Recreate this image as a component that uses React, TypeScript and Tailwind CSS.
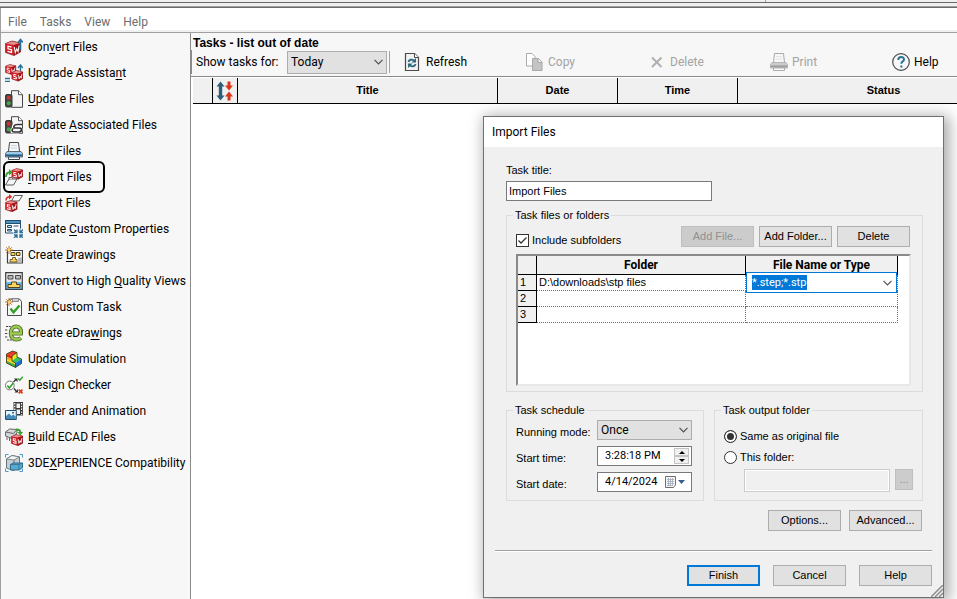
import type { ReactNode } from "react";

const UI = "font-[Roboto,'Open_Sans',sans-serif]";
const SANS = "font-['Liberation_Sans',Arial,sans-serif]";

function Svg({ children, size = 18 }: { children: ReactNode; size?: number }) {
  return (
    <svg width={size} height={size} viewBox="0 0 18 18" fill="none" className="shrink-0" aria-hidden="true">
      {children}
    </svg>
  );
}

function Cube({ x = 0, y = 0, s = 1 }: { x?: number; y?: number; s?: number }) {
  return (
    <g transform={`translate(${x} ${y}) scale(${s})`}>
      <path d="M.5 4.500 7 2l8.500 2v9L9 16.500l-8.500-3z" fill="#cf1c22" />
      <path d="M.5 4.500 7 2l8.500 2L9 6z" fill="#e88f8c" />
      <path d="M9 6l6.500-2v9L9 16.500z" fill="#a31418" />
      <path d="M.5 4.500 7 2l8.500 2v9L9 16.500l-8.500-3z" stroke="#7c2a2c" strokeWidth=".7" />
      <path d="M6.500 8 3 7.200v2.600l3.500.9v2.800L2.500 12.400" stroke="#fff" strokeWidth="1.300" />
      <path d="M9.300 8l1 5.500 1.500-3.700 1.200 2.700 1.200-6" stroke="#fff" strokeWidth="1.100" />
    </g>
  );
}

function UpArrow() {
  return <path d="M15.500 12V2M13 4.500 15.500 1.500 18 4.500" stroke="#2b7099" strokeWidth="1.600" />;
}

function TrafficPage({ children }: { children?: ReactNode }) {
  return (
    <Svg>
      <path d="M6.500.7h7l4 4v12.600h-11z" fill="#f4f4f4" stroke="#484848" />
      <path d="M13.500.7v4h4" fill="#fff" stroke="#484848" strokeWidth=".9" />
      <rect x=".5" y="4.500" width="6.500" height="12.500" rx="1.500" fill="#4a4444" stroke="#3a3a3a" />
      <circle cx="3.700" cy="7.800" r="2" fill="#d0342c" />
      <circle cx="3.700" cy="13.200" r="2" fill="#3fae49" />
      {children}
    </Svg>
  );
}

function Spark() {
  return (
    <>
      <path d="M4 0v8M0 4h8M1.300 1.300l5.400 5.400M6.700 1.300 1.300 6.700" stroke="#b5651d" strokeWidth=".9" />
      <circle cx="4" cy="4" r="1.400" fill="#ffd45c" />
    </>
  );
}

function PrinterIcon({ muted = false }: { muted?: boolean }) {
  const line = muted ? "#a9a9a9" : "#3e4a54";
  return (
    <Svg>
      <path d="M3.500 9.500l1-9h9l1 9" fill="#f7f7f7" stroke={line} />
      <path d="M6 3.500h6M6 6h6" stroke={muted ? "#ddd" : "#c4cace"} strokeWidth=".8" />
      <path d="M2 9.500h14l1.500 2v3.500H.5v-3.500z" fill={muted ? "#ccc" : "#9ccbea"} stroke={line} strokeWidth=".8" />
      <path d="M1 13.300h16" stroke={muted ? "#9f9f9f" : "#245f8a"} strokeWidth="1.800" />
      <path d="M3.500 15h11v2.500h-11z" fill="#fff" stroke={line} />
    </Svg>
  );
}

const TASKS: { label: [string, string, string]; icon: ReactNode; active?: boolean }[] = [
  {
    label: ["Con", "v", "ert Files"],
    icon: <Svg><Cube y={1} /><UpArrow /></Svg>,
  },
  {
    label: ["Upgrade Assista", "n", "t"],
    icon: (
      <Svg>
        <Cube s={0.7} y={-1} />
        <Cube x={6.5} y={5} s={0.74} />
        <path d="M0 14.500h5M0 17.500h5" stroke="#2b7099" strokeWidth="1.300" />
        <path d="M15.500 7V1.500M13 4l2.500-3L18 4" stroke="#2b7099" strokeWidth="1.400" />
      </Svg>
    ),
  },
  { label: ["", "U", "pdate Files"], icon: <TrafficPage /> },
  {
    label: ["Update ", "A", "ssociated Files"],
    icon: (
      <TrafficPage>
        <path d="M17 9h-5c-4 0-5 3-2 3h4c3 0 2.500 4-1 4H8.500c-2 0-2-2.500 0-3.500" stroke="#fff" strokeWidth="3.200" />
        <path d="M17 8.500h-4.500c-4 0-5 3.500-2 3.500h4c3 0 2.500 4-1 4H9c-2.500 0-2.500-3-.5-3.500" stroke="#303030" strokeWidth="1.600" />
      </TrafficPage>
    ),
  },
  { label: ["", "P", "rint Files"], icon: <PrinterIcon /> },
  {
    label: ["", "I", "mport Files"],
    active: true,
    icon: (
      <Svg>
        <Cube x={6.5} y={-1} s={0.74} />
        <path d="M1 9C1 5.500 2.500 4.300 5 4.300" stroke="#35a02b" strokeWidth="1.800" />
        <path d="M4 1l3.500 3.300L4 7.500z" fill="#35a02b" />
        <path d="M4 11h8l-3.500 6H.5z" fill="#f5f5f5" stroke="#5c5c5c" />
        <path d="M4 11V9.500h3L8 11" fill="#ddd" stroke="#5c5c5c" />
      </Svg>
    ),
  },
  {
    label: ["", "E", "xport Files"],
    icon: (
      <Svg>
        <path d="M9.500 1.500h8L14 7H6.500z" fill="#fafafa" stroke="#5c5c5c" />
        <Cube y={5} s={0.78} />
        <path d="M1 6.500C1 3.500 2.500 2.800 5 2.800" stroke="#d9302c" strokeWidth="1.600" />
        <path d="M4 0l3.200 2.800L4 5.600z" fill="#d9302c" />
      </Svg>
    ),
  },
  {
    label: ["Update ", "C", "ustom Properties"],
    icon: (
      <Svg>
        <path d="M.5.500h15v12.500H.5z" fill="#fff" stroke="#234f6e" />
        <path d="M.5.500h15v3H.5z" fill="#4f91bd" stroke="#234f6e" />
        <path d="M2.500 5.500h4v2h-4zM2.500 9.500h4v1.500h-4z" fill="#b8dcf0" stroke="#234f6e" />
        <path d="M8.500 6h5" stroke="#234f6e" />
        <path d="M8.500 8.500H18V18H8.500z" fill="#f7f7f7" />
        <path d="M9 9.500l3 3m0-3v3H9M18 9.500l-3 3m0-3v3h3M9 18l3-3m0 3v-3H9M18 18l-3-3m0 3v-3h3" stroke="#2b7099" strokeWidth="1.300" />
      </Svg>
    ),
  },
  {
    label: ["Create ", "D", "rawings"],
    icon: (
      <Svg>
        <path d="M2.500 4.500h15v12.500h-15z" fill="#fff" stroke="#3f3f3f" strokeWidth="1.200" />
        <path d="M6 6.500h4v3H6zM11.500 6.500H15v3h-3.500z" fill="#ffd45c" stroke="#4d431f" />
        <path d="M7.500 11.500h3v2h1.500V16H5v-2.500h2.500z" fill="#ffd45c" stroke="#4d431f" strokeWidth=".8" />
        <path d="M13 11.500h4v5h-4z" fill="#bbb" />
        <Spark />
      </Svg>
    ),
  },
  {
    label: ["Convert to High ", "Q", "uality Views"],
    icon: (
      <Svg>
        <path d="M.7.700h16.600v16.600H.7z" fill="#e7e7e7" />
        <path d="M1 10h16v7H1z" fill="#6ebbed" />
        <path d="M.7.700h16.600v16.600H.7z" stroke="#3f3f3f" strokeWidth="1.200" />
        <path d="M3 3.500h5v3.500H3zM10.500 3.500h5v3.500h-5z" fill="#b9b9b9" stroke="#4a4a4a" />
        <path d="M6.500 10h5v2.500h3.500v3H3v-3h3.500z" fill="#ffd45c" stroke="#4d431f" />
      </Svg>
    ),
  },
  {
    label: ["", "R", "un Custom Task"],
    icon: (
      <Svg>
        <path d="M2.500 3.500 5 1h9.500l2 2.500v14h-14z" fill="#f8f8f8" stroke="#4b4b4b" />
        <path d="M7.500 .500h6v3h-6z" fill="#d0d0d0" stroke="#777" strokeWidth=".8" />
        <path d="M5.500 10.500l3 3.800L14.500 7.500" stroke="#35a02b" strokeWidth="2.400" />
        <Spark />
      </Svg>
    ),
  },
  {
    label: ["Create eDra", "w", "ings"],
    icon: (
      <Svg>
        <path d="M1 2.500h5M0 6h3M0 9.500h3M0 13h3M2 16h5" stroke="#444" strokeDasharray="2 .7" />
        <path d="M6 9.500h10C16.500 5 14.500 2.500 11.300 2.500S5.800 5 5.800 9.200s2.500 6.300 5.500 6.300c2 0 3.500-.5 4.700-1.500" stroke="#4c6230" strokeWidth="4" />
        <path d="M6 9.500h10C16.500 5 14.500 2.500 11.300 2.500S5.800 5 5.800 9.200s2.500 6.300 5.500 6.300c2 0 3.500-.5 4.700-1.500" stroke="#9ccc4c" strokeWidth="2.300" />
      </Svg>
    ),
  },
  {
    label: ["Update Simulation", "", ""],
    icon: (
      <Svg>
        <path d="M1.500 4 7 6v5l3.500 2v4.500L1.500 13z" fill="#f7a51c" />
        <path d="M1.500 4 7.500 1 12 2.500 7 6z" fill="#ee3a22" />
        <path d="M1.500 4 7 6v2.500l-5.500-2z" fill="#e2231a" />
        <path d="M1.500 9 7 11l3.500 2v1.500l-9-4z" fill="#f4e01c" />
        <path d="M1.500 11l9 4v2.500l-9-4.500z" fill="#35b44a" />
        <path d="M7 6l5-3.500V7L7 11z" fill="#f4e01c" />
        <path d="M7 11l5-4 4.500 2-6 4z" fill="#35c45a" />
        <path d="M10.500 13l6-4v4.500l-6 4z" fill="#1a72d4" />
        <path d="M1.500 4 7.500 1 12 2.500V7l4.500 2v4.500l-6 4L1.500 13zM7 6v5l3.500 2v4.500M7 6l5-3.500" stroke="#33331c" strokeWidth=".8" />
      </Svg>
    ),
  },
  {
    label: ["Desi", "g", "n Checker"],
    icon: (
      <Svg>
        <circle cx="4.800" cy="9.500" r="4.400" fill="#fff" stroke="#777" />
        <path d="M2.300 9.500l2 2.500 4-5" stroke="#35a02b" strokeWidth="1.700" />
        <path d="M8.500 6 11 3.500M9 12.500l2.500 3" stroke="#333" strokeWidth="1.200" />
        <path d="M9 2.500h3.500V6zM9.500 16.500H13V13z" fill="#333" />
        <path d="M13.200 2.500 14.800 4.200 17.800.8" stroke="#35a02b" strokeWidth="1.500" />
        <path d="M13.700 13.500l3.800 3.800m0-3.800-3.800 3.800" stroke="#d3401f" strokeWidth="1.700" />
      </Svg>
    ),
  },
  {
    label: ["Render and Animation", "", ""],
    icon: (
      <Svg>
        <path d="M8.500 0H18v13.500H8.500z" fill="#3a3a3a" />
        <path d="M11.500 1.500h3.500V6h-3.500zM11.500 7.500h3.500V12h-3.500z" fill="#f4f4f4" />
        <path d="M9.800 1v12M16.600 1v12" stroke="#fff" strokeWidth="1.200" strokeDasharray="1.400 1.400" />
        <path d="M0 8h12v10H0z" fill="#f7f7f7" />
        <path d="M.5 8.500h10.800v9H.5z" fill="#e9f6ff" stroke="#234f6e" />
        <path d="M1 17v-3l3-2.500 2.500 2.500L8 12.500l2.800 2V17z" fill="#438bb9" />
        <circle cx="8" cy="10.700" r=".9" fill="#234f6e" />
      </Svg>
    ),
  },
  {
    label: ["", "B", "uild ECAD Files"],
    icon: (
      <Svg>
        <path d="M.5 4 4.500 1l7.500.5v3.500L8.500 8v3l-8-3z" fill="#d4d8da" stroke="#666" />
        <path d="M.5 4l8 1.500L12 1.500M2 8.500v3.500M4.500 9.500V13" stroke="#666" />
        <Cube x={6} y={5} s={0.77} />
        <path d="M11 1.500c3 0 4.500.5 4.500 3" stroke="#35a02b" strokeWidth="1.800" />
        <path d="M12.500 4H18l-2.700 3.500z" fill="#35a02b" />
      </Svg>
    ),
  },
  {
    label: ["3DE", "X", "PERIENCE Compatibility"],
    icon: (
      <Svg>
        <path d="M1.500 5 7 1.500l7.500 1.500v11L8 16.500l-6.500-2.500z" fill="#c7ced2" stroke="#66757e" />
        <path d="M1.500 5 7 1.500l7.500 1.500L9 6z" fill="#f0f2f3" stroke="#66757e" strokeWidth=".8" />
        <path d="M9 6v10" stroke="#66757e" />
        <path d="M5.500 10.500 8 9h9.500v4.500L14 16H5.500z" fill="#5aa9cf" stroke="#2e6f90" />
        <path d="M5.500 10.500H14V16M14 10.500 17.500 9" stroke="#2e6f90" strokeWidth=".8" />
        <path d="M3.500.5h-3v3M14.500.5h3v3M3.500 17.500h-3v-3M14.500 17.500h3v-3" stroke="#4b9cc4" />
      </Svg>
    ),
  },
];

const TOOLS: { label: string; icon: ReactNode; disabled?: boolean }[] = [
  {
    label: "Refresh",
    icon: (
      <Svg>
        <path d="M1.500.5h9l4 4v13h-13z" fill="#f2f2f2" stroke="#4b4b4b" strokeWidth="1.200" />
        <path d="M10.500.5v4h4" fill="#fff" stroke="#4b4b4b" />
        <path d="M4.500 9c.5-2.500 3.500-3 5.500-1.500M11.500 11c-.5 2.500-3.500 3-5.500 1.500" stroke="#2d687e" strokeWidth="1.800" />
        <path d="M12 5v4.500H7.500zM4 15v-4.500h4.500z" fill="#2d687e" />
      </Svg>
    ),
  },
  {
    label: "Copy",
    disabled: true,
    icon: (
      <Svg>
        <path d="M.5.5H6l3 3v9.500H.5z" fill="#fff" stroke="#a9a9a9" />
        <path d="M6.500 5.500h6l3.500 3.500v8.500H6.500z" fill="#c4c4c4" stroke="#a9a9a9" />
        <path d="M12 5.500V9.500h4" fill="#eee" stroke="#a9a9a9" />
      </Svg>
    ),
  },
  {
    label: "Delete",
    disabled: true,
    icon: (
      <Svg>
        <path d="M4 4.500l9.500 9.500M13.500 4.500 4 14" stroke="#b0b0b0" strokeWidth="2" />
      </Svg>
    ),
  },
  { label: "Print", disabled: true, icon: <PrinterIcon muted /> },
  {
    label: "Help",
    icon: (
      <Svg>
        <circle cx="9" cy="9" r="8.300" fill="#f7f7f7" stroke="#4b4b4b" strokeWidth="1.200" />
        <path d="M6.300 7c0-4 5.700-3.700 5.700-.6 0 2-2.700 2-2.700 4.300M9.300 12.500v2" stroke="#2a7395" strokeWidth="2" />
      </Svg>
    ),
  },
];

function Chevron() {
  return (
    <svg width="9" height="6" viewBox="0 0 9 6" fill="none" className="pointer-events-none" aria-hidden="true">
      <path d="M.5.8l4 4 4-4" stroke="#505050" strokeWidth="1.200" />
    </svg>
  );
}

function Select({ id, value, className }: { id: string; value: string; className: string }) {
  return (
    <div className={`relative shrink-0 ${className}`}>
      <select id={id} className="h-full w-full appearance-none border border-[#adadad] bg-[#e1e1e1] px-[3px] text-black">
        <option>{value}</option>
      </select>
      <span className="pointer-events-none absolute inset-y-0 right-1 flex items-center">
        <Chevron />
      </span>
    </div>
  );
}

function Button({ children, disabled, primary }: { children: ReactNode; disabled?: boolean; primary?: boolean }) {
  return (
    <button
      type="button"
      disabled={disabled}
      className={`h-[21px] w-[73px] shrink-0 text-center ${
        primary
          ? "border-2 border-[#0078d7] bg-[#e1e1e1]"
          : disabled
            ? "border border-[#bfbfbf] bg-[#cccccc] text-[#909090]"
            : "border border-[#adadad] bg-[#e1e1e1]"
      }`}
    >
      {children}
    </button>
  );
}

function Group({ title, className, children }: { title: string; className: string; children: ReactNode }) {
  return (
    <fieldset className={`min-w-0 border border-[#dcdcdc] ${className}`}>
      <legend className="-ml-[3px] px-[2px] leading-4">{title}</legend>
      {children}
    </fieldset>
  );
}

function FileTable() {
  return (
    <div className="mt-[7px] h-[132px] border-2 border-t-[#8a8a8a] border-r-[#e8e8e8] border-b-[#e8e8e8] border-l-[#8a8a8a] bg-white">
      <table className="w-[380px] table-fixed border-separate border-spacing-0 text-left">
        <colgroup>
          <col className="w-[19px]" />
          <col className="w-[209px]" />
          <col />
        </colgroup>
        <thead className={`${UI} text-center text-xs`}>
          <tr className="h-[19px] bg-[#f0f0f0]">
            <th className="border-r border-b border-black" />
            <th className="border-r border-b border-black p-0 font-bold">Folder</th>
            <th className="border-r border-b border-black p-0 font-bold">File Name or Type</th>
          </tr>
        </thead>
        <tbody>
          {["D:\\downloads\\stp files", "", ""].map((folder, i) => (
            <tr key={i} className="h-4">
              <th className="border-r border-b border-black bg-[#f0f0f0] p-0 pl-[2px] font-normal leading-[15px]">{i + 1}</th>
              <td className="border-r border-b border-dotted border-[#707070] p-0 pl-[2px] leading-[15px]">{folder}</td>
              <td className="relative border-r border-b border-dotted border-[#707070] p-0">
                {i === 0 && (
                  <div className="absolute -top-[3px] left-0 flex h-[21px] w-full items-center border border-[#0078d7] bg-white pr-1 pl-[5px]">
                    <input
                      aria-label="File name or type"
                      defaultValue="*.step;*.stp"
                      className={`${UI} h-[15px] w-[55px] bg-[#0078d7] text-white`}
                    />
                    <button type="button" aria-label="Show file types" className="ml-auto">
                      <Chevron />
                    </button>
                  </div>
                )}
              </td>
            </tr>
          ))}
        </tbody>
      </table>
    </div>
  );
}

function ImportDialog() {
  return (
    <div
      role="dialog"
      aria-label="Import Files"
      className={`${SANS} absolute top-[116px] right-[13px] w-[461px] border border-[#707070] bg-[#f0f0f0] text-[11px] text-black shadow-[3px_2px_14px_2px_rgba(0,0,0,0.35)]`}
    >
      <h2 className={`${UI} flex h-[30px] items-center bg-white px-2 text-xs`}>Import Files</h2>
      <div className="pt-[15px] pr-5 pl-[22px]">
        <label htmlFor="title" className="block leading-4">Task title:</label>
        <input
          id="title"
          defaultValue="Import Files"
          className="mt-[3px] block h-5 w-[206px] border border-[#7a7a7a] bg-white px-[2px]"
        />
        <Group title="Task files or folders" className="mt-[6px] pt-[3px] pr-[11px] pb-[5px] pl-[9px]">
          <div className="flex items-end gap-[5px] pr-px">
            <label className="mr-auto flex items-center gap-[3px] leading-[13px]">
              <span className="relative size-[13px]">
                <input type="checkbox" defaultChecked className="block size-[13px] appearance-none border border-[#333] bg-white" />
                <svg viewBox="0 0 13 13" fill="none" className="pointer-events-none absolute inset-0" aria-hidden="true">
                  <path d="M2.500 6.500 5 9l5.500-5.500" stroke="#333" strokeWidth="1.300" />
                </svg>
              </span>
              Include subfolders
            </label>
            <Button disabled>Add File...</Button>
            <Button>Add Folder...</Button>
            <Button>Delete</Button>
          </div>
          <FileTable />
        </Group>

        <div className="mt-[10px] flex items-stretch gap-[10px]">
          <Group title="Task schedule" className="w-[198px] pt-[2px] pr-[11px] pb-2 pl-[9px]">
            <div className="flex flex-col gap-[6px]">
              <div className="flex items-end justify-between">
                <label htmlFor="mode" className="leading-4">Running mode:</label>
                <Select id="mode" value="Once" className={`${UI} h-5 w-[95px] text-xs`} />
              </div>
              <div className="flex items-end justify-between">
                <label htmlFor="time" className="leading-4">Start time:</label>
                <div className="flex h-5 w-[95px] items-center border border-[#7a7a7a] bg-white pr-[2px] pl-[7px]">
                  <input id="time" defaultValue="3:28:18 PM" className={`${UI} min-w-0 flex-1`} />
                  <div className="flex w-[15px] flex-col">
                    <button type="button" aria-label="Later" className="flex h-2 items-center justify-center border border-[#c4c4c4] bg-[#f0f0f0]">
                      <svg width="6" height="3" viewBox="0 0 6 3" aria-hidden="true"><path d="M0 3 3 0l3 3z" /></svg>
                    </button>
                    <button type="button" aria-label="Earlier" className="flex h-2 items-center justify-center border border-[#c4c4c4] bg-[#f0f0f0]">
                      <svg width="6" height="3" viewBox="0 0 6 3" aria-hidden="true"><path d="M0 0h6L3 3z" /></svg>
                    </button>
                  </div>
                </div>
              </div>
              <div className="flex items-end justify-between">
                <label htmlFor="date" className="leading-4">Start date:</label>
                <div className="flex h-5 w-[95px] items-center border border-[#7a7a7a] bg-white pr-[6px] pl-[7px]">
                  <input id="date" defaultValue="4/14/2024" className={`${UI} min-w-0 flex-1`} />
                  <button type="button" aria-label="Open calendar">
                    <svg width="20" height="12" viewBox="0 0 20 12" fill="none" aria-hidden="true">
                      <path d="M.5.5h10v8.500l-2 2.500h-8z" fill="#f3f5f8" stroke="#746e70" />
                      <path d="M2 3.500h7M2 5.500h7M2 7.500h7M2 9.500h5M3.500 2v8M5.500 2v8M7.500 2v8" stroke="#a3acb8" strokeWidth=".8" />
                      <path d="M13 4h7l-3.500 4z" fill="#3c5a8c" />
                    </svg>
                  </button>
                </div>
              </div>
            </div>
          </Group>

          <Group title="Task output folder" className="flex-1 pt-3 pr-[9px] pl-[9px]">
            <label className="flex items-center gap-[3px] leading-[13px]">
              <input type="radio" name="output" defaultChecked className="size-[13px] appearance-none rounded-full border border-[#333] bg-white checked:bg-[#333] checked:shadow-[inset_0_0_0_2px_white]" />
              Same as original file
            </label>
            <label className="mt-2 flex items-center gap-[3px] leading-[13px]">
              <input type="radio" name="output" className="size-[13px] appearance-none rounded-full border border-[#333] bg-white checked:bg-[#333] checked:shadow-[inset_0_0_0_2px_white]" />
              This folder:
            </label>
            <div className="mt-[5px] flex gap-[5px] pl-5">
              <input
                disabled
                aria-label="Output folder"
                className="h-[23px] min-w-0 flex-1 border border-[#cccccc] bg-[#f0f0f0] shadow-[inset_0_0_0_1px_white]"
              />
              <button type="button" disabled aria-label="Browse" className="h-[21px] w-[18px] border border-[#bfbfbf] bg-[#cccccc] text-[#909090]">
                ...
              </button>
            </div>
          </Group>
        </div>

        <div className="mt-[9px] flex justify-end gap-2 pr-px">
          <Button>Options...</Button>
          <Button>Advanced...</Button>
        </div>
      </div>
      <div className="mt-[19px] mr-[11px] ml-[11px] flex justify-end gap-[13px] border-t border-[#a0a0a0] pt-[14px] pb-[11px] shadow-[inset_0_1px_0_white]">
        <Button primary>Finish</Button>
        <Button>Cancel</Button>
        <Button>Help</Button>
      </div>
      <svg width="12" height="12" viewBox="0 0 12 12" className="absolute right-0 bottom-0" aria-hidden="true">
        <path d="M0 12 12 0M4 12l8-8M8 12l4-4" stroke="#8c8c8c" strokeWidth="1.500" />
      </svg>
    </div>
  );
}

export default function App() {
  return (
    <div className={`${UI} relative flex min-h-screen flex-col overflow-hidden bg-white text-xs text-black`}>
      <div className="flex h-2 flex-col bg-[#f0f0f0]">
        <div className="flex h-[2px]">
          <div className="w-4/5 border-r border-[#a0a0a0]" />
        </div>
        <div className="h-px bg-[#696969]" />
        <div className="mt-auto h-px bg-[#a0a0a0]" />
        <div className="h-px bg-[#696969]" />
      </div>
      <nav className="flex h-[25px] items-center gap-[13px] border-b border-l border-[#a0a0a0] px-[7px] pt-1 text-[#6d6d6d] shadow-[inset_0_-2px_0_#f0f0f0]">
        {["File", "Tasks", "View", "Help"].map((item) => (
          <button key={item} type="button">{item}</button>
        ))}
      </nav>

      <div className="flex flex-1 border-l border-[#a0a0a0]">
        <aside className="w-[190px] shrink-0 border-r border-[#8a8a8a] bg-[#f7f7f7] pt-px">
          {TASKS.map(({ label: [before, key, after], icon, active }) => (
            <a key={before + key + after} href="#" className="relative flex h-[26px] items-center gap-[5px] pl-1 whitespace-nowrap">
              {active && <span className="absolute -top-[3px] left-[2px] h-8 w-[102px] rounded-md border-2 border-black" />}
              {icon}
              <span>
                {before}
                <span className="underline underline-offset-2">{key}</span>
                {after}
              </span>
            </a>
          ))}
        </aside>

        <main className="min-w-0 flex-1 overflow-hidden">
          <div className="h-11 border-b border-[#8a8a8a] bg-[#f7f7f7]">
            <h1 className={`${SANS} pt-[3px] pl-[2px] font-bold leading-[14px]`}>Tasks - list out of date</h1>
            <div className="flex h-6 items-center border-l border-[#8a8a8a] pl-1 whitespace-nowrap">
              <label htmlFor="range" className="w-[91px] shrink-0">Show tasks for:</label>
              <Select id="range" value="Today" className="h-[23px] w-[100px]" />
              <div className="ml-[2px] h-[22px] w-px shrink-0 bg-[#a0a0a0]" />
              <div className="ml-[14px] flex">
                {TOOLS.map(({ label, icon, disabled }) => (
                  <div key={label} className="w-[122px] shrink-0">
                    <button type="button" disabled={disabled} className="flex items-center gap-1 disabled:text-[#a3a3a3]">
                      {icon}
                      {label}
                    </button>
                  </div>
                ))}
              </div>
            </div>
          </div>
          <table className={`${SANS} mt-px ml-[2px] w-[837px] table-fixed border-separate border-spacing-0 text-[11px]`}>
            <colgroup>
              <col className="w-5" />
              <col className="w-[25px]" />
              <col className="w-[260px]" />
              <col className="w-[120px]" />
              <col className="w-[120px]" />
              <col />
            </colgroup>
            <thead>
              <tr className="h-[26px] bg-[#f0f0f0]">
                <th className="border-r border-b border-black" />
                <th className="border-r border-b border-black p-0" aria-label="Order">
                  <svg width="18" height="20" viewBox="0 0 18 20" fill="none" className="mx-auto" aria-hidden="true">
                    <path d="M4.500 3.500v13" stroke="#2d5f7d" strokeWidth="3.400" />
                    <path d="M.5 5.500 4.500.5l4 5zM.5 14.500l4 5 4-5z" fill="#2d5f7d" />
                    <path d="M13 .5V6M13 19.500V14" stroke="#d9371b" strokeWidth="3" />
                    <path d="M9 4.500h8L13 9.500zM9 15.500h8L13 10.500z" fill="#d9371b" />
                  </svg>
                </th>
                {["Title", "Date", "Time", "Status"].map((title) => (
                  <th key={title} className="border-r border-b border-black p-0 font-bold">{title}</th>
                ))}
              </tr>
            </thead>
          </table>
        </main>
      </div>
      <ImportDialog />
    </div>
  );
}
